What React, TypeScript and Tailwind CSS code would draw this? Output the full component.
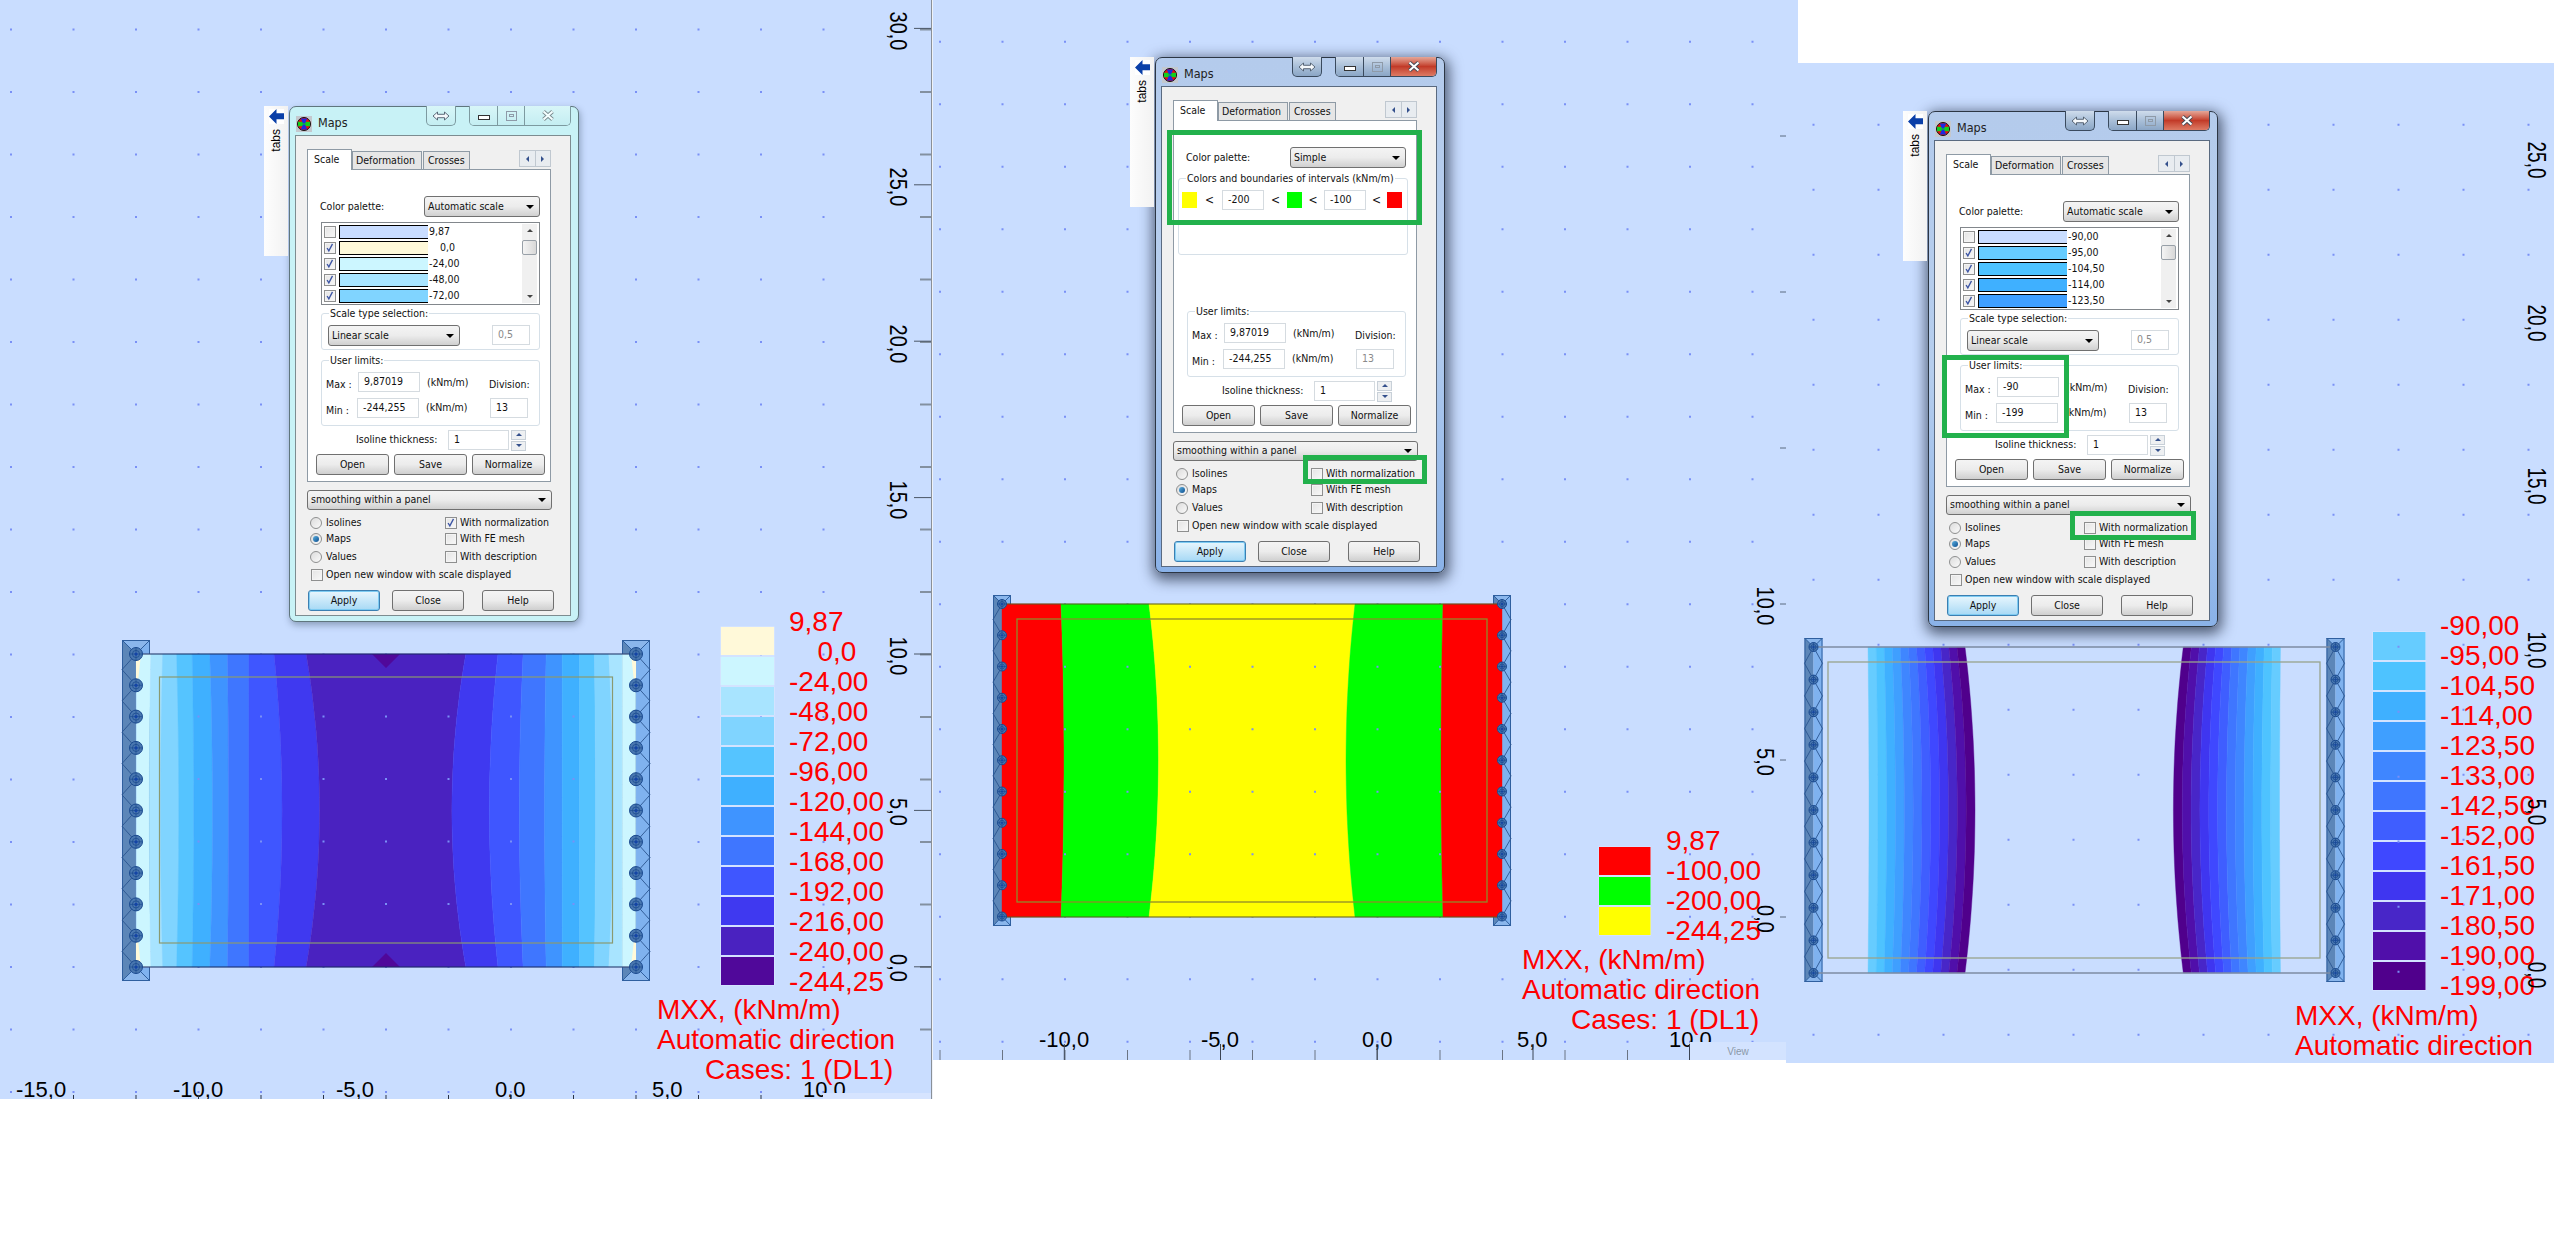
import React from "react";

const RED = "#ff0000";
const AF = "'Liberation Sans', Arial, sans-serif";

function curve(top: number, mid: number, y0: number, y1: number, reverse = false) {
  const pts: [number, number][] = [];
  const n = 24;
  for (let i = 0; i <= n; i++) {
    const s = i / n;
    const y = y0 + (y1 - y0) * s;
    const t = 1 - Math.abs(s - 0.5) * 2;
    const x = top + (mid - top) * (1 - (1 - t) * (1 - t));
    pts.push([x, y]);
  }
  if (reverse) pts.reverse();
  return pts;
}

function Bands({ tops, mids, colors, y0, y1 }: { tops: number[]; mids: number[]; colors: string[]; y0: number; y1: number }) {
  return (
    <g>
      {colors.map((c, i) => {
        const a = curve(tops[i], mids[i], y0, y1);
        const b = curve(tops[i + 1], mids[i + 1], y0, y1, true);
        const d = "M" + [...a, ...b].map((p) => p[0].toFixed(1) + " " + p[1].toFixed(1)).join("L") + "Z";
        return <path key={i} d={d} fill={c} stroke={c} strokeWidth={0.4} />;
      })}
    </g>
  );
}

function Dots({ x0, dx, x1, y0, dy, y1 }: { x0: number; dx: number; x1: number; y0: number; dy: number; y1: number }) {
  let d = "";
  for (let x = x0; x <= x1; x += dx) for (let y = y0; y <= y1; y += dy) d += `M${(x - 1).toFixed(1)} ${(y - 1).toFixed(1)}h2v2h-2z`;
  return <path d={d} fill="#7a90f6" />;
}

function SupportBody({ cx, w, y0, y1, top, step }: { cx: number; w: number; y0: number; y1: number; top: number; step: number }) {
  const x = cx - w / 2;
  const nodes = Array.from({ length: 11 }, (_, i) => top + i * step);
  return (
    <g>
      <rect x={x} y={y0} width={w / 2} height={y1 - y0} fill="#5c86b8" />
      <rect x={cx} y={y0} width={w / 2} height={y1 - y0} fill="#7fb2ef" />
      <path d={`M${x} ${y0}H${x + w}L${cx} ${top}Z M${x} ${y1}H${x + w}L${cx} ${nodes[10]}Z`} fill="#8ab6ec" />
      <rect x={x + 0.5} y={y0 + 0.5} width={w - 1} height={y1 - y0 - 1} fill="none" stroke="#2f5f9f" />
      <path d={`M${x} ${y0}L${cx} ${top}L${x + w} ${y0}M${x} ${y1}L${cx} ${nodes[10]}L${x + w} ${y1}`} stroke="#2f5f9f" fill="none" />
      {nodes.slice(0, 10).map((n, i) => (
        <path
          key={i}
          d={`M${cx} ${n}L${x} ${n + step / 2}L${cx} ${n + step}L${x + w} ${n + step / 2}L${cx} ${n}`}
          stroke="#2a5590"
          strokeWidth={0.9}
          fill="none"
        />
      ))}
    </g>
  );
}

function SupportNodes({ cx, top, step, r }: { cx: number; top: number; step: number; r: number }) {
  return (
    <g>
      {Array.from({ length: 11 }, (_, i) => top + i * step).map((n, i) => (
        <g key={i}>
          <circle cx={cx} cy={n} r={r} fill="#4a78b0" stroke="#1a4a90" />
          <circle cx={cx} cy={n} r={r * 0.55} fill="none" stroke="#1a4a90" strokeWidth={0.8} />
          <circle cx={cx} cy={n} r={r * 0.25} fill="#0f3fc0" />
          <path d={`M${cx - r} ${n}h${2 * r}M${cx} ${n - r}v${2 * r}`} stroke="#1a4a90" strokeWidth={0.7} />
        </g>
      ))}
    </g>
  );
}

function Legend({ x, w, y0, colors, labelX, base, labels, indents = {}, h = 28 }: { x: number; w: number; y0: number; colors: string[]; labelX: number; base: number; labels: string[]; indents?: Record<number, number>; h?: number }) {
  return (
    <g>
      {colors.map((c, i) => (
        <g key={i}>
          <rect x={x - 0.5} y={y0 + i * 30 - 0.5} width={w + 1} height={h + 1} fill="#e6eeff" opacity={0.7} />
          <rect x={x} y={y0 + i * 30} width={w} height={h} fill={c} />
        </g>
      ))}
      {labels.map((t, i) => (
        <text key={t} x={labelX + (indents[i] || 0)} y={base + i * 30} fontSize={28} fill={RED} fontFamily={AF}>
          {t}
        </text>
      ))}
    </g>
  );
}

function Caption({ x, base, cx, cases }: { x: number; base: number; cx?: number; cases?: boolean }) {
  return (
    <g fontSize={28} fill={RED} fontFamily={AF}>
      <text x={x} y={base}>MXX, (kNm/m)</text>
      <text x={x} y={base + 30}>Automatic direction</text>
      {cases && <text x={cx} y={base + 60}>Cases: 1 (DL1)</text>}
    </g>
  );
}

function VLabel({ x, y, t, fs = 20, sy = 1.2 }: { x: number; y: number; t: string; fs?: number; sy?: number }) {
  return (
    <text transform={`translate(${x} ${y}) rotate(90) scale(1 ${sy})`} textAnchor="middle" fontSize={fs} fill="#000" fontFamily={AF}>
      {t}
    </text>
  );
}

function HLabel({ x, y, t }: { x: number; y: number; t: string }) {
  return (
    <text x={x} y={y} fontSize={22} fill="#000" fontFamily={AF}>
      {t}
    </text>
  );
}

const blues1 = ["#fff9d9", "#ccf6ff", "#a8e4ff", "#80d4ff", "#55c4ff", "#3fb0ff", "#3f94ff", "#3f76ff", "#3f56ff", "#3f39f0", "#4a22c0", "#50089a"];
const blues3 = ["#66ccff", "#4ec3ff", "#3fb0ff", "#3f9fff", "#3f86ff", "#3f76ff", "#3f5eff", "#3f48ff", "#3f36f0", "#4826c8", "#500faa", "#50008c"];

function ChartOne() {
  const ticks: React.ReactNode[] = [];
  for (let i = 0; i < 17; i++) {
    const y = 29.5 + 62.5 * i;
    ticks.push(<path key={i} d={`M920 ${y}H931`} stroke="#8390a0" strokeWidth={2} />);
  }
  [28.4, 184.8, 341.2, 497.6, 654, 810.4, 966.8].forEach((y, i) => ticks.push(<path key={"m" + i} d={`M914 ${y}H931`} stroke="#4a5666" />));
  const lc = ["#ccf6ff", "#a8e4ff", "#80d4ff", "#55c4ff", "#3fb0ff", "#3f94ff", "#3f76ff", "#3f56ff", "#3f39f0", "#4a22c0", "#3f39f0", "#3f56ff", "#3f76ff", "#3f94ff", "#3fb0ff", "#55c4ff", "#80d4ff", "#a8e4ff", "#ccf6ff"];
  const tops = [136.4, 150.9, 162.7, 176.6, 192.1, 209.8, 227.5, 248.9, 274, 306.2, 465.8, 498, 523.1, 546.2, 562.2, 579.4, 594.4, 608.8, 622.2, 635.6];
  const mids = [136.4, 149.3, 160.5, 178.7, 193.7, 212.5, 228.5, 248.9, 282.1, 319.6, 451.9, 489.4, 519.4, 544.6, 562.2, 579.4, 595.5, 613.1, 622.2, 635.6];
  return (
    <svg className="block" width={933} height={1099} viewBox="0 0 933 1099">
      <Dots x0={11} dx={62.5} x1={880} y0={29.5} dy={62.5} y1={1092} />
      <SupportBody cx={136} w={28} y0={640} y1={981} top={654} step={31.3} />
      <SupportBody cx={636} w={28} y0={640} y1={981} top={654} step={31.3} />
      <Bands tops={tops} mids={mids} colors={lc} y0={654} y1={967} />
      <path d="M136 654H141L137 690H136ZM136 967H141L137 931H136ZM636 654H631L635 690H636ZM636 967H631L635 931H636Z" fill="#fff9d9" />
      <path d="M372 654L386 668L400 654ZM372 967L386 953L400 967Z" fill="#50089a" />
      <path d="M136 654H636M136 967H636" stroke="#1a2a60" strokeWidth={1.2} />
      <rect x={159.5} y={677} width={453} height={266} fill="none" stroke="#8a9a70" strokeWidth={1.2} />
      <Dots x0={198.5} dx={62.5} x1={600} y0={716.5} dy={62.5} y1={905} />
      <SupportNodes cx={136} top={654} step={31.3} r={6.5} />
      <SupportNodes cx={636} top={654} step={31.3} r={6.5} />
      <Legend x={721} w={53} y0={627} colors={blues1} labelX={789} base={630.5} indents={{ 1: 28.5 }} labels={["9,87", "0,0", "-24,00", "-48,00", "-72,00", "-96,00", "-120,00", "-144,00", "-168,00", "-192,00", "-216,00", "-240,00", "-244,25"]} />
      <Caption x={657} base={1019} cx={705} cases />
      {ticks}
      <path d="M931.5 0V1099" stroke="#8a9098" />
      <path d="M932.5 0V1099" stroke="#eef2f8" />
      {[["30,0", 31], ["25,0", 187], ["20,0", 344], ["15,0", 500], ["10,0", 656], ["5,0", 812], ["0,0", 968]].map(([t, y]) => (
        <VLabel key={t as string} x={890} y={y as number} t={t as string} />
      ))}
      {[["-15,0", 16], ["-10,0", 173], ["-5,0", 336], ["0,0", 495], ["5,0", 652], ["10,0", 803]].map(([t, x]) => (
        <HLabel key={t as string} x={x as number} y={1097} t={t as string} />
      ))}
      {Array.from({ length: 14 }, (_, i) => 11 + 62.5 * (i + 1)).map((x) => (
        <path key={x} d={`M${x} 1095V1099`} stroke="#2a3444" />
      ))}
      <rect x={823} y={1093} width={108} height={6} fill="#d6e4ff" />
    </svg>
  );
}

function ChartTwo() {
  const bottom: React.ReactNode[] = [];
  for (let i = 0; i < 14; i++) bottom.push(<path key={i} d={`M${940 + 62.5 * i} 1050V1060`} stroke="#6a7484" />);
  [1064.3, 1220.5, 1377, 1533, 1689.5].forEach((x) => bottom.push(<path key={x} d={`M${x} 1044V1060`} stroke="#3a4454" />));
  return (
    <svg className="block" width={865} height={1060} viewBox="933 0 865 1060">
      <Dots x0={940} dx={62.5} x1={1760} y0={41.7} dy={62.5} y1={1045} />
      <SupportBody cx={1002} w={18} y0={595} y1={926} top={604} step={31.25} />
      <SupportBody cx={1502} w={18} y0={595} y1={926} top={604} step={31.25} />
      <Bands tops={[1002, 1061, 1149, 1355, 1443, 1502]} mids={[1002, 1064, 1158.5, 1346, 1441, 1502]} colors={["#ff0000", "#00ff00", "#ffff00", "#00ff00", "#ff0000"]} y0={604} y1={917} />
      <path d="M1002 604H1502M1002 917H1502" stroke="#5a5a20" strokeWidth={1.2} />
      <rect x={1017} y={619} width={470} height={283} fill="none" stroke="#8f8a2a" strokeWidth={1.3} />
      <Dots x0={1065} dx={62.5} x1={1440} y0={666.7} dy={62.5} y1={860} />
      <SupportNodes cx={1002} top={604} step={31.25} r={4.5} />
      <SupportNodes cx={1502} top={604} step={31.25} r={4.5} />
      <Legend x={1599} w={51.5} y0={847} colors={["#ff0000", "#00ff00", "#ffff00"]} labelX={1666} base={850} labels={["9,87", "-100,00", "-200,00", "-244,25"]} />
      <Caption x={1522} base={969} cx={1571} cases />
      {[["10,0", 606], ["5,0", 762], ["0,0", 919]].map(([t, y]) => (
        <VLabel key={t as string} x={1757} y={y as number} t={t as string} />
      ))}
      {[136, 292, 448, 604, 760, 917].map((y) => <path key={y} d={`M1780 ${y}H1786`} stroke="#5a6a80" />)}
      {[["-10,0", 1039], ["-5,0", 1201], ["0,0", 1362], ["5,0", 1517], ["10,0", 1669]].map(([t, x]) => (
        <HLabel key={t as string} x={x as number} y={1047} t={t as string} />
      ))}
      {bottom}
    </svg>
  );
}

function ChartThree() {
  const n = 12;
  const lerp = (a: number, b: number) => Array.from({ length: n + 1 }, (_, i) => a + ((b - a) * i) / n);
  return (
    <svg className="block" width={768} height={1063} viewBox="1786 0 768 1063">
      <Dots x0={1813.5} dx={65} x1={2540} y0={124.7} dy={65} y1={1040} />
      <SupportBody cx={1813.5} w={18} y0={638} y1={982} top={647} step={32.6} />
      <SupportBody cx={2335.5} w={18} y0={638} y1={982} top={647} step={32.6} />
      <Bands tops={lerp(1868, 1965)} mids={lerp(1869, 1975)} colors={blues3} y0={647} y1={973} />
      <Bands tops={lerp(2183.3, 2280.5)} mids={lerp(2173.4, 2279.5)} colors={[...blues3].reverse()} y0={647} y1={973} />
      <path d="M1814 647H2335M1814 973H2335" stroke="#7d8ca4" strokeWidth={1.5} />
      <rect x={1828} y={662} width={492} height={296} fill="none" stroke="#98a48c" strokeWidth={1.3} />
      <SupportNodes cx={1813.5} top={647} step={32.6} r={4.5} />
      <SupportNodes cx={2335.5} top={647} step={32.6} r={4.5} />
      <Legend x={2373} w={52.5} y0={632} colors={blues3} labelX={2440} base={635} labels={["-90,00", "-95,00", "-104,50", "-114,00", "-123,50", "-133,00", "-142,50", "-152,00", "-161,50", "-171,00", "-180,50", "-190,00", "-199,00"]} />
      <Dots x0={2398.5} dx={65} x1={2400} y0={646.7} dy={65} y1={990} />
      <Caption x={2295} base={1025} />
      {[["25,0", 160], ["20,0", 323], ["15,0", 486], ["10,0", 650], ["5,0", 812], ["0,0", 975]].map(([t, y]) => (
        <VLabel key={t as string} x={2528} y={y as number} t={t as string} fs={19} sy={1.4} />
      ))}
    </svg>
  );
}

/* ---------- dialog widgets ---------- */

function Caret() {
  return <span className="w-0 h-0 border-x-[4px] border-x-transparent border-t-[4px] border-t-black shrink-0" />;
}

function Select({ text, className }: { text: string; className: string }) {
  return (
    <div className={`${className} flex items-center justify-between pl-[3px] pr-[5px] rounded-[3px] border border-[#707070] bg-gradient-to-b from-[#f4f4f4] via-[#ececec] to-[#d0d0d0] text-[#111]`}>
      <span>{text}</span>
      <Caret />
    </div>
  );
}

function Btn({ text, w, primary }: { text: string; w: string; primary?: boolean }) {
  return (
    <div
      className={`${w} h-[21px] flex items-center justify-center rounded-[3px] border text-[#111] ${
        primary ? "border-[#3c7fb1] bg-gradient-to-b from-[#e8f6fd] to-[#a7d9f5] shadow-[inset_0_0_0_1px_#7ecbf2]" : "border-[#707070] bg-gradient-to-b from-[#f4f4f4] via-[#ececec] to-[#cfcfcf]"
      }`}
    >
      {text}
    </div>
  );
}

function Field({ text, w, disabled }: { text: string; w: string; disabled?: boolean }) {
  return (
    <div className={`${w} h-[20px] flex items-center pl-[5px] bg-white border border-[#d5dbe0] ${disabled ? "text-[#8a8a8a]" : "text-[#111]"}`}>{text}</div>
  );
}

function Check({ on }: { on?: boolean }) {
  return (
    <span className="relative block w-[12px] h-[12px] shrink-0 border border-[#8e8f8f] bg-gradient-to-br from-[#e4e4e4] to-[#f8f8f8] shadow-[inset_0_0_0_1px_#f4f4f4]">
      {on && (
        <svg viewBox="0 0 12 12" className="absolute inset-0 w-[10px] h-[10px]">
          <path d="M2.5 6L4.6 9.5L9 1" stroke="#3c55a5" strokeWidth={1.6} fill="none" />
        </svg>
      )}
    </span>
  );
}

function Radio({ on }: { on?: boolean }) {
  return (
    <span className="flex items-center justify-center w-[12px] h-[12px] shrink-0 rounded-full border border-[#8e8f8f] bg-gradient-to-br from-[#dcdcdc] to-[#fafafa]">
      {on && <span className="block w-[6px] h-[6px] rounded-full bg-gradient-to-br from-[#5ab0e0] to-[#0d4f8f]" />}
    </span>
  );
}

function Group({ title, className, children, left = "left-[7px]" }: { title: string; className: string; children: React.ReactNode; left?: string }) {
  return (
    <div className={`${className} relative border border-[#d6e0e8] rounded-[3px]`}>
      <span className={`absolute -top-[8px] ${left} bg-white px-[1px] leading-[14px] whitespace-nowrap text-[#111]`}>{title}</span>
      {children}
    </div>
  );
}

function ListBox({ rows }: { rows: { c: string; t: string; on: boolean; indent?: boolean }[] }) {
  return (
    <div className="relative ml-[13px] mt-[5px] w-[219px] h-[83px] border border-[#82878c] pt-[1px] pl-[2px] overflow-hidden">
      {rows.map((r) => (
        <div key={r.t} className="flex items-center h-[16px]">
          <Check on={r.on} />
          <span className="block ml-[3px] w-[89px] h-[14px] border-y border-l border-black" style={{ background: r.c }} />
          <span className={`${r.indent ? "ml-[12px]" : "ml-[1px]"} text-[#111]`}>{r.t}</span>
        </div>
      ))}
      <div className="absolute right-[2px] top-[1px] bottom-[1px] w-[15px] bg-[#f0f0f0] flex flex-col items-center justify-between py-[5px]">
        <span className="w-0 h-0 border-x-[3px] border-x-transparent border-b-[3px] border-b-[#444]" />
        <span className="absolute top-[16px] left-0 w-[15px] h-[15px] border border-[#98a0a8] rounded-[2px] bg-gradient-to-r from-[#f4f4f4] to-[#d8d8d8]" />
        <span className="w-0 h-0 border-x-[3px] border-x-transparent border-t-[3px] border-t-[#444]" />
      </div>
    </div>
  );
}

function AppIcon() {
  return (
    <svg viewBox="0 0 16 16" className="w-[16px] h-[16px] shrink-0 -ml-[1px]">
      <rect width="16" height="16" fill="#c4c8ce" />
      <circle cx="8" cy="8" r="6.5" fill="#e81010" stroke="#111" strokeWidth="1" />
      <path d="M2 5.8H14V10.2H2Z" fill="#10d020" />
      <path d="M4.8 2.6H11.2L9.4 6.5L9.4 9.5L11.2 13.4H4.8L6.6 9.5L6.6 6.5Z" fill="#1a2ae0" />
      <path d="M6 8H10" stroke="#10d020" strokeWidth="1.2" />
    </svg>
  );
}

function TitleButtons({ active }: { active: boolean }) {
  const edge = active ? "border-[#3a4a5e]" : "border-[#7d9aa0]";
  const bg = active ? "bg-gradient-to-b from-[#cfdcec] via-[#a9bfd8] to-[#8ba6c6]" : "bg-gradient-to-b from-[#d8f6f8] to-[#c4eef2]";
  return (
    <>
      <div className={`w-[30px] h-[20px] -mt-[1px] flex items-center justify-center rounded-b-[5px] border border-t-0 ${edge} ${bg}`}>
        <svg viewBox="0 0 18 10" className="w-[18px] h-[10px]">
          <path d="M1 5L5.5 1V3.3H12.5V1L17 5L12.5 9V6.7H5.5V9Z" fill="#f4f8fb" stroke="#3c4a5c" strokeWidth="0.8" />
        </svg>
      </div>
      <div className={`ml-[13px] w-[102px] h-[20px] -mt-[1px] flex rounded-b-[5px] border border-t-0 overflow-hidden ${edge}`}>
        <div className={`w-[28px] flex items-center justify-center border-r ${edge} ${bg}`}>
          <span className="block w-[12px] h-[5px] mt-[3px] bg-white border border-[#333]" />
        </div>
        <div className={`w-[27px] flex items-center justify-center border-r ${edge} ${bg}`}>
          <span className="flex items-center justify-center w-[11px] h-[10px] border border-[#8e9aa8]">
            <span className="block w-[5px] h-[3px] border border-[#8e9aa8]" />
          </span>
        </div>
        <div className={`flex-1 flex items-center justify-center ${active ? "bg-gradient-to-b from-[#e4a698] via-[#c23a28] to-[#dd7a64]" : bg}`}>
          <svg viewBox="0 0 14 11" className="w-[14px] h-[11px]">
            <path d="M2.5 1.5L11.5 9.5M11.5 1.5L2.5 9.5" stroke={active ? "#444c58" : "#7c8c90"} strokeWidth="3.8" />
            <path d="M2.5 1.5L11.5 9.5M11.5 1.5L2.5 9.5" stroke={active ? "#ffffff" : "#f4ffff"} strokeWidth="2" />
          </svg>
        </div>
      </div>
    </>
  );
}

function Limits({ max, min, div, divDisabled }: { max: string; min: string; div: string; divDisabled?: boolean }) {
  return (
    <Group title="User limits:" className="ml-[13px] mt-[10px] w-[219px] h-[66px]">
      <div className="flex items-center h-[20px] mt-[11px] pl-[4px]">
        <span className="w-[32px] text-[#111] mt-[5px]">Max :</span>
        <Field text={max} w="w-[62px]" />
        <span className="ml-[7px] w-[62px] text-[#111] mt-[2px]">(kNm/m)</span>
        <span className="text-[#111] mt-[5px]">Division:</span>
      </div>
      <div className="flex items-center h-[20px] mt-[6px] pl-[4px]">
        <span className="w-[31px] text-[#111] mt-[5px]">Min :</span>
        <Field text={min} w="w-[62px]" />
        <span className="ml-[7px] w-[64px] text-[#111]">(kNm/m)</span>
        <Field text={div} w="w-[38px]" disabled={divDisabled} />
      </div>
    </Group>
  );
}

function Dialog({ pos, active, palette, rows, max, min, divDisabled, normalized }: { pos: string; active: boolean; palette: string; rows?: { c: string; t: string; on: boolean; indent?: boolean }[]; max: string; min: string; divDisabled?: boolean; normalized: boolean }) {
  return (
    <div className={`absolute ${pos} w-[290px] h-[516px] font-['DejaVu_Sans','Liberation_Sans',sans-serif] text-[10.5px] [font-stretch:condensed]`}>
      <div
        className={`w-full h-full flex flex-col rounded-[7px] border pl-[5px] pr-[7px] pb-[5px] ${
          active
            ? "border-[#2c3644] bg-gradient-to-b from-[#b4cbec] via-[#b6ceee] to-[#8ab2e8] shadow-[1px_4px_14px_3px_rgba(15,25,45,0.65)]"
            : "border-[#5f767e] bg-[#c8f2f6] shadow-[1px_3px_7px_rgba(40,60,80,0.4)]"
        }`}
      >
        <div className="h-[28px] flex shrink-0 text-[#222]">
          <div className="w-[131px] flex items-center pt-[5px] pl-[2px]">
            <AppIcon />
            <span className="ml-[6px] text-[12.5px]">Maps</span>
          </div>
          <TitleButtons active={active} />
        </div>
        <div className={`flex-1 flex flex-col bg-[#f0f0f0] border pl-[11px] pt-[13px] ${active ? "border-[#5a6a80]" : "border-[#7d8c90]"}`}>
          <div className="relative flex items-end h-[20px] w-[245px] text-[#111]">
            <div className="relative z-10 -mb-px w-[45px] h-[21px] bg-white border border-b-0 border-[#8e9aa5] pl-[6px] pt-[2px]">Scale</div>
            <div className="w-[70px] h-[18px] bg-[#e6e6e6] border border-[#8e9aa5] border-b-0 pl-[3px] pt-[1px]">Deformation</div>
            <div className="ml-px w-[47px] h-[18px] bg-[#e6e6e6] border border-[#8e9aa5] border-b-0 pl-[4px] pt-[1px]">Crosses</div>
            <div className="ml-auto mb-[2px] mr-px flex w-[32px] h-[17px] border border-[#c0c8d0]">
              <div className="flex-1 flex items-center justify-center bg-[#e8ecf0] border-r border-[#c0c8d0]">
                <span className="w-0 h-0 border-y-[3px] border-y-transparent border-r-[3px] border-r-[#34508c]" />
              </div>
              <div className="flex-1 flex items-center justify-center bg-[#e8ecf0]">
                <span className="w-0 h-0 border-y-[3px] border-y-transparent border-l-[3px] border-l-[#34508c]" />
              </div>
            </div>
          </div>
          <div className="w-[244px] h-[313px] bg-white border border-[#8e9aa5] flex flex-col pt-[26px] shrink-0">
            <div className="flex items-center h-[21px] pl-[12px]">
              <span className="w-[104px] text-[#111]">Color palette:</span>
              <Select text={palette} className="w-[116px] h-[21px]" />
            </div>
            {rows ? (
              <>
                <ListBox rows={rows} />
                <Group title="Scale type selection:" className="ml-[13px] mt-[8px] w-[219px] h-[37px]">
                  <div className="flex pl-[6px] pt-[11px]">
                    <Select text="Linear scale" className="w-[132px] h-[21px]" />
                    <div className="ml-[32px]">
                      <Field text="0,5" w="w-[38px]" disabled />
                    </div>
                  </div>
                </Group>
              </>
            ) : (
              <>
                <Group title="Colors and boundaries of intervals (kNm/m)" className="ml-[4px] mt-[10px] w-[230px] h-[77px]">
                  <div className="flex items-center h-[20px] mt-[11px] pl-[3px] text-[#111]">
                    <span className="block w-[15px] h-[16px] bg-[#ffff00]" />
                    <span className="w-[25px] text-center text-[12px]">&lt;</span>
                    <Field text="-200" w="w-[42px]" />
                    <span className="w-[23px] text-center text-[12px]">&lt;</span>
                    <span className="block w-[15px] h-[16px] bg-[#00ff00]" />
                    <span className="w-[22px] text-center text-[12px]">&lt;</span>
                    <Field text="-100" w="w-[42px]" />
                    <span className="w-[21px] text-center text-[12px]">&lt;</span>
                    <span className="block w-[15px] h-[16px] bg-[#ff0000]" />
                  </div>
                </Group>
                <div className="h-[46px]" />
              </>
            )}
            <Limits max={max} min={min} div="13" divDisabled={divDisabled} />
            <div className="flex items-center h-[20px] mt-[4px]">
              <span className="w-[140px] pl-[48px] text-[#111]">Isoline thickness:</span>
              <Field text="1" w="w-[61px]" />
              <div className="ml-[2px] w-[15px] h-[21px] flex flex-col gap-px">
                <div className="flex-1 flex items-center justify-center border border-[#c8d0d8] bg-[#eef0f2]">
                  <span className="w-0 h-0 border-x-[3px] border-x-transparent border-b-[3px] border-b-[#34508c]" />
                </div>
                <div className="flex-1 flex items-center justify-center border border-[#c8d0d8] bg-[#eef0f2]">
                  <span className="w-0 h-0 border-x-[3px] border-x-transparent border-t-[3px] border-t-[#34508c]" />
                </div>
              </div>
            </div>
            <div className="flex gap-[5px] pl-[8px] mt-[4px]">
              <Btn text="Open" w="w-[73px]" />
              <Btn text="Save" w="w-[73px]" />
              <Btn text="Normalize" w="w-[73px]" />
            </div>
          </div>
          <Select text="smoothing within a panel" className="mt-[8px] w-[245px] h-[20px] shrink-0" />
          <div className="mt-[5px] flex flex-col text-[#111]">
            <div className="flex items-center h-[16px]">
              <div className="w-[138px] flex items-center gap-[4px] pl-[3px]"><Radio /><span>Isolines</span></div>
              <div className="flex items-center gap-[3px]"><Check on={normalized} /><span>With normalization</span></div>
            </div>
            <div className="flex items-center h-[16px]">
              <div className="w-[138px] flex items-center gap-[4px] pl-[3px]"><Radio on /><span>Maps</span></div>
              <div className="flex items-center gap-[3px]"><Check /><span>With FE mesh</span></div>
            </div>
            <div className="flex items-center h-[16px] mt-[2px]">
              <div className="w-[138px] flex items-center gap-[4px] pl-[3px]"><Radio /><span>Values</span></div>
              <div className="flex items-center gap-[3px]"><Check /><span>With description</span></div>
            </div>
            <div className="flex items-center h-[16px] mt-[2px] pl-[4px] gap-[3px]"><Check /><span>Open new window with scale displayed</span></div>
          </div>
          <div className="mt-[7px] flex pl-px">
            <Btn text="Apply" w="w-[72px]" primary />
            <div className="ml-[12px]"><Btn text="Close" w="w-[72px]" /></div>
            <div className="ml-[18px]"><Btn text="Help" w="w-[72px]" /></div>
          </div>
        </div>
      </div>
      <div className="absolute -left-[25px] top-0 w-[24px] h-[150px] bg-gradient-to-r from-[#fdfdfd] to-[#f2f2f2] flex flex-col items-center pt-[3px]">
        <svg viewBox="0 0 16 16" className="w-[15px] h-[15px]">
          <rect width="16" height="16" fill="#ffffff" />
          <path d="M8 0V4.5H16V11H8V16L0 8Z" fill="#0a3fa8" />
        </svg>
        <span className="mt-[5px] text-[12px] leading-[14px] text-black [writing-mode:vertical-rl] rotate-180 font-['Liberation_Sans',sans-serif]">tabs</span>
      </div>
    </div>
  );
}

const rowsOne = [
  { c: "#c9ddff", t: "9,87", on: false },
  { c: "#fff9d9", t: "0,0", on: true, indent: true },
  { c: "#ccf6ff", t: "-24,00", on: true },
  { c: "#a8e4ff", t: "-48,00", on: true },
  { c: "#80d4ff", t: "-72,00", on: true },
];
const rowsThree = [
  { c: "#c9ddff", t: "-90,00", on: false },
  { c: "#66ccff", t: "-95,00", on: true },
  { c: "#4ec3ff", t: "-104,50", on: true },
  { c: "#3fb0ff", t: "-114,00", on: true },
  { c: "#3f9fff", t: "-123,50", on: true },
];

export default function App() {
  return (
    <div className="relative w-[2554px] h-[1234px] bg-white overflow-hidden">
      <div className="absolute left-0 top-0 w-[933px] h-[1099px] bg-[#c9ddff]">
        <ChartOne />
      </div>
      <div className="absolute left-[933px] top-0 w-[865px] h-[1060px] bg-[#c9ddff]">
        <ChartTwo />
      </div>
      <div className="absolute left-[1690px] top-[1042px] w-[96px] h-[18px] bg-[#d3e3ff] flex items-center justify-center text-[10px] text-[#8a98a8] font-['Liberation_Sans',sans-serif]">View</div>
      <div className="absolute left-[1786px] top-0 w-[768px] h-[1063px] bg-[#c9ddff]">
        <ChartThree />
      </div>
      <div className="absolute left-[1798px] top-0 w-[756px] h-[63px] bg-white" />

      <Dialog pos="left-[289px] top-[106px]" active={false} palette="Automatic scale" rows={rowsOne} max="9,87019" min="-244,255" normalized />
      <Dialog pos="left-[1155px] top-[57px]" active palette="Simple" max="9,87019" min="-244,255" divDisabled normalized={false} />
      <Dialog pos="left-[1928px] top-[111px]" active palette="Automatic scale" rows={rowsThree} max="-90" min="-199" normalized={false} />

      <div className="absolute left-[1167px] top-[130px] w-[255px] h-[95px] border-[5px] border-[#22b14c]" />
      <div className="absolute left-[1303px] top-[455px] w-[124px] h-[29px] border-[5px] border-[#22b14c]" />
      <div className="absolute left-[1942px] top-[355px] w-[127px] h-[83px] border-[5px] border-[#22b14c]" />
      <div className="absolute left-[2070px] top-[511px] w-[126px] h-[29px] border-[5px] border-[#22b14c]" />
    </div>
  );
}
